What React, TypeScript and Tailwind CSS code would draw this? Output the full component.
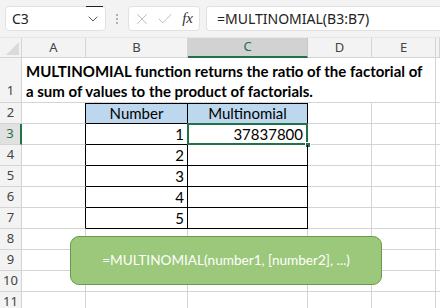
import { ChevronDown, X, Check } from 'lucide-react';

const cols = [
  { key: 'A', w: 'w-[64px]' },
  { key: 'B', w: 'w-[102px]' },
  { key: 'C', w: 'w-[120px]' },
  { key: 'D', w: 'w-[64px]' },
  { key: 'E', w: 'w-[64px]' },
  { key: 'F', w: 'flex-1' },
];

const numbers = [1, 2, 3, 4, 5];

function Toolbar() {
  return (
    <div className="h-[37px] bg-[#f3f3f3] flex items-start pt-[6px] pl-[5px] gap-0">
      <div className="relative w-[101px] h-[25px] bg-white border border-[#e1e1e1] rounded-[4px] flex items-center pl-[6px] pr-[4px]">
        <span className="text-[14px] text-[#222] font-['Noto_Sans',sans-serif]">C3</span>
        <ChevronDown size={16} strokeWidth={1.5} className="ml-auto text-[#555]" />
        <div className="absolute top-[-1px] right-[2px] w-[17px] h-[1px] bg-[#222]" />
      </div>
      <div className="w-[22px] h-[25px] flex flex-col items-center justify-center gap-[2px]">
        <span className="w-[2px] h-[2px] rounded-full bg-[#999]" />
        <span className="w-[2px] h-[2px] rounded-full bg-[#999]" />
        <span className="w-[2px] h-[2px] rounded-full bg-[#999]" />
      </div>
      <div className="w-[72px] h-[25px] bg-white border border-[#e1e1e1] rounded-[4px] flex items-center pl-[4px] pr-[6px]">
        <X size={18} strokeWidth={1.2} className="text-[#b5b5b5]" />
        <Check size={18} strokeWidth={1.2} className="text-[#b5b5b5] ml-[5px]" />
        <span className="ml-auto text-[15px] italic text-[#333] font-['Liberation_Serif',serif]">fx</span>
      </div>
      <div className="ml-[6px] flex-1 h-[25px] bg-white border border-[#e1e1e1] border-r-0 rounded-l-[4px] flex items-center pl-[10px]">
        <span className="text-[14px] text-[#222] font-['Noto_Sans',sans-serif]">=MULTINOMIAL(B3:B7)</span>
      </div>
    </div>
  );
}

function HeaderRow() {
  return (
    <div className="flex h-[21px] bg-[#f3f3f3] border-t border-[#e6e6e6]">
      <div className="w-[22px] border-r border-b border-[#d4d4d4] relative">
        <div className="absolute right-[2px] bottom-[2px] w-0 h-0 border-l-[13px] border-l-transparent border-b-[13px] border-b-[#dadada]" />
      </div>
      {cols.map((c) =>
        c.key === 'C' ? (
          <div
            key={c.key}
            className={`${c.w} bg-[#d2d2d2] border-r border-[#c6c6c6] border-b-2 border-b-[#217346] flex items-center justify-center text-[13px] text-[#217346]`}
          >
            {c.key}
          </div>
        ) : (
          <div
            key={c.key}
            className={`${c.w} border-r border-b border-[#d4d4d4] flex items-center justify-center text-[13px] text-[#444]`}
          >
            {c.key === 'F' ? '' : c.key}
          </div>
        )
      )}
    </div>
  );
}

function RowHead({ n, active }: { n: number; active?: boolean }) {
  return active ? (
    <div className="w-[22px] shrink-0 bg-[#e1e1e1] border-r-2 border-r-[#217346] border-b border-b-[#d4d4d4] flex items-center justify-center text-[13px] text-[#217346]">
      {n}
    </div>
  ) : (
    <div className="w-[22px] shrink-0 bg-[#f3f3f3] border-r border-b border-[#d4d4d4] flex items-center justify-center text-[13px] text-[#444]">
      {n}
    </div>
  );
}

export default function App() {
  return (
    <div className="relative w-[440px] h-[308px] overflow-hidden bg-white font-['Noto_Sans',sans-serif]">
      <Toolbar />
      <HeaderRow />

      {/* row 1 : merged A1:E1 */}
      <div className="flex h-[45px]">
        <div className="w-[22px] shrink-0 bg-[#f3f3f3] border-r border-b border-[#d4d4d4] flex items-end justify-center pb-[2px] text-[13px] text-[#444]">
          1
        </div>
        <div className="w-[414px] border-r border-b border-[#d4d4d4] px-[4px] pt-[3px] font-['Lato',sans-serif] font-bold text-[15px] leading-[20px] text-black">
          MULTINOMIAL function returns the ratio of the factorial of a sum of values to the product of factorials.
        </div>
        <div className="flex-1 border-b border-[#d4d4d4]" />
      </div>

      {/* row 2 : table header */}
      <div className="flex h-[21px]">
        <RowHead n={2} />
        <div className="w-[64px] border-r border-r-black border-b border-b-[#d4d4d4]" />
        <div className="w-[102px] bg-[#bdd7ee] border-r border-b border-black border-t flex items-center justify-center text-[15px] font-['Lato',sans-serif] text-black">
          Number
        </div>
        <div className="w-[120px] bg-[#bdd7ee] border-r border-b border-black border-t flex items-center justify-center text-[15px] font-['Lato',sans-serif] text-black">
          Multinomial
        </div>
        <div className="w-[64px] border-r border-b border-[#d4d4d4]" />
        <div className="w-[64px] border-r border-b border-[#d4d4d4]" />
        <div className="flex-1 border-b border-[#d4d4d4]" />
      </div>

      {numbers.map((v, i) => (
        <div key={v} className="flex h-[21px]">
          <RowHead n={i + 3} active={i === 0} />
          <div className="w-[64px] border-r border-r-black border-b border-b-[#d4d4d4]" />
          <div className="w-[102px] border-r border-b border-black flex items-center justify-end pr-[3px] text-[15px] font-['Lato',sans-serif] text-black">
            {v}
          </div>
          <div className="relative w-[120px] border-r border-b border-black flex items-center justify-end pr-[4px] text-[15px] font-['Lato',sans-serif] text-black">
            {i === 0 && (
              <>
                37837800
                <div className="absolute left-[-1px] top-[-1px] right-[-1px] bottom-[-1px] border-2 border-[#217346]" />
                <div className="absolute right-[-4px] bottom-[-4px] w-[6px] h-[6px] bg-[#217346] border border-white" />
              </>
            )}
          </div>
          <div className="w-[64px] border-r border-b border-[#d4d4d4]" />
          <div className="w-[64px] border-r border-b border-[#d4d4d4]" />
          <div className="flex-1 border-b border-[#d4d4d4]" />
        </div>
      ))}

      {[8, 9, 10, 11].map((n) => (
        <div key={n} className="flex h-[21px]">
          <RowHead n={n} />
          <div className="w-[64px] border-r border-b border-[#d4d4d4]" />
          <div className="w-[102px] border-r border-b border-[#d4d4d4]" />
          <div className="w-[120px] border-r border-b border-[#d4d4d4]" />
          <div className="w-[64px] border-r border-b border-[#d4d4d4]" />
          <div className="w-[64px] border-r border-b border-[#d4d4d4]" />
          <div className="flex-1 border-b border-[#d4d4d4]" />
        </div>
      ))}

      {/* floating syntax callout */}
      <div className="absolute left-[70px] top-[236px] w-[312px] h-[49px] rounded-[9px] bg-[#9cc87b] border border-[#6a9a47] flex items-center justify-center">
        <span className="text-[13.6px] text-white font-['Lato',sans-serif]">=MULTINOMIAL(number1, [number2], ...)</span>
      </div>
    </div>
  );
}
